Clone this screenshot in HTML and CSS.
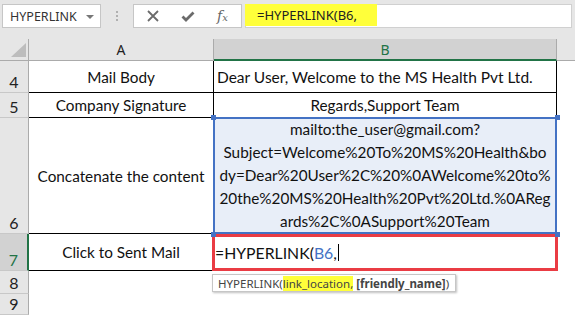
FILE: index.html
```html
<!DOCTYPE html>
<html>
<head>
<meta charset="utf-8">
<link rel="stylesheet" href="styles.css">
</head>
<body>
<div class="app">
  <div class="toolbar">
    <div class="namebox"><span class="nb-text">HYPERLINK</span><span class="caret"></span></div>
    <div class="dots"><i></i><i></i><i></i></div>
    <div class="fxbox">
      <svg class="ico" width="14" height="14" viewBox="0 0 14 14"><path d="M2 2 L12 12 M12 2 L2 12" stroke="#6b6b6b" stroke-width="1.8" fill="none"/></svg>
      <svg class="ico" width="16" height="14" viewBox="0 0 16 14"><path d="M2.5 7.5 L6 11 L13.5 3.5" stroke="#6b6b6b" stroke-width="2.8" fill="none"/></svg>
      <span class="fx"><span class="f">f</span><span class="x">x</span></span>
    </div>
    <div class="formula"><span class="hl">=HYPERLINK(B6,</span></div>
  </div>
  <div class="sheet">
    <div class="corner"><span class="tri"></span></div>
    <div class="ch">A</div>
    <div class="ch ch-sel">B</div>
    <div class="ch ch-fill"></div>

    <div class="rh">4</div>
    <div class="c">Mail Body</div>
    <div class="c c-left">Dear User, Welcome to the MS Health Pvt Ltd.</div>
    <div class="blank"></div>

    <div class="rh">5</div>
    <div class="c">Company Signature</div>
    <div class="c">Regards,Support Team</div>
    <div class="blank"></div>

    <div class="rh">6</div>
    <div class="c">Concatenate the content</div>
    <div class="c c-ref"><div class="wrap">mailto:the_user@gmail.com?<br>Subject=Welcome%20To%20MS%20Health&amp;bo<br>dy=Dear%20User%2C%20%0AWelcome%20to%<br>20the%20MS%20Health%20Pvt%20Ltd.%0AReg<br>ards%2C%0ASupport%20Team</div><span class="h h-tl"></span><span class="h h-tr"></span><span class="h h-bl"></span><span class="h h-br"></span></div>
    <div class="blank"></div>

    <div class="rh rh-sel">7</div>
    <div class="c">Click to Sent Mail</div>
    <div class="c c-edit"><span class="edit">=HYPERLINK(<span class="ref">B6</span>,<span class="cursor"></span></span>
      <div class="tip">HYPERLINK(<span class="tip-hl">link_location,</span> <b>[friendly_name]</b>)</div>
    </div>
    <div class="blank"></div>

    <div class="rh">8</div>
    <div class="e"></div>
    <div class="e"></div>
    <div class="blank"></div>

    <div class="rh">9</div>
    <div class="e"></div>
    <div class="e"></div>
    <div class="blank"></div>
  </div>
</div>
</body>
</html>
```
FILE: styles.css
```css
* { box-sizing: border-box; }
html, body { margin: 0; padding: 0; }
body { width: 575px; height: 315px; overflow: hidden; background: #fff; font-family: Lato, "Open Sans", sans-serif; }
.app { display: flex; flex-direction: column; height: 315px; background: #e6e6e6; }

.toolbar { height: 39px; display: flex; align-items: flex-start; padding: 4px 2px 0 2px; }
.namebox { width: 99px; height: 24px; background: #fff; border: 1px solid #c6c6c6; display: flex; align-items: center; justify-content: space-between; padding: 0 6px 0 7px; font-family: "Noto Sans", sans-serif; font-size: 12.5px; color: #333; }
.caret { width: 0; height: 0; border-left: 4px solid transparent; border-right: 4px solid transparent; border-top: 4px solid #777; margin-top: 1px; }
.dots { width: 32px; height: 24px; display: flex; flex-direction: column; align-items: center; justify-content: center; gap: 2px; }
.dots i { width: 2px; height: 2px; background: #b0b0b0; display: block; }
.fxbox { width: 109px; height: 24px; background: #fff; border: 1px solid #c6c6c6; display: flex; align-items: center; padding-left: 12px; gap: 0; }
.fxbox .ico:first-child { margin-right: 20px; }
.fxbox .ico:nth-child(2) { margin-right: 21px; }
.fx { font-family: "DejaVu Serif", serif; font-style: italic; color: #666; font-size: 14px; line-height: 1; }
.fx .x { font-size: 10px; }
.formula { flex: 1; height: 24px; margin-left: 3px; margin-right: 1px; background: #fff; border: 1px solid #d0d0d0; display: flex; }
.hl { background: #ffff3a; width: 132px; height: 22px; margin-left: -1px; margin-top: -1px; padding-left: 12px; display: flex; align-items: center; font-family: "Noto Sans", sans-serif; font-size: 13px; color: #222; }

.sheet { flex: 1; display: grid; grid-template-columns: 29px 185px 343px 18px; grid-template-rows: 22px 32px 25px 116px 37px 23px 1fr; background: #fff; }
.corner { background: #e6e6e6; border-right: 1px solid #ababab; border-bottom: 1px solid #ababab; position: relative; }
.tri { position: absolute; left: 11px; top: 4px; width: 0; height: 0; border-left: 15px solid transparent; border-bottom: 14px solid #bdbdbd; }
.ch { background: #e6e6e6; border-right: 1px solid #ababab; border-bottom: 1px solid #ababab; display: flex; align-items: center; justify-content: center; font-family: "Noto Sans", sans-serif; font-size: 14px; color: #222; }
.ch-sel { background: #d2d2d2; border-bottom: 2px solid #217346; color: #217346; }
.ch-fill { border-right: none; }

.rh { background: #e6e6e6; border-right: 1px solid #ababab; border-bottom: 1px solid #c8c8c8; display: flex; align-items: flex-end; justify-content: center; padding-bottom: 1px; font-size: 16px; color: #222; line-height: 1.1; }
.rh-sel { background: #d2d2d2; border-right: 2px solid #217346; color: #217346; }

.c { border-right: 1px solid #000; border-bottom: 1px solid #000; display: flex; align-items: center; justify-content: center; text-align: center; font-size: 15.3px; color: #111; white-space: nowrap; position: relative; }
.c-left { justify-content: flex-start; padding-left: 3px; font-size: 15.5px; }
.e { background: #fff; }
.blank { background: #fff; }

.c-ref { background: #e8eef8; }
.c-ref::after { content: ""; position: absolute; left: -1px; top: -1px; right: -1px; bottom: -1px; border: 2px solid #4472c4; pointer-events: none; }
.wrap { line-height: 23px; }
.h { position: absolute; width: 5px; height: 5px; background: #4472c4; z-index: 2; }
.h-tl { left: -3px; top: -3px; }
.h-tr { right: -4px; top: -3px; }
.h-bl { left: -3px; bottom: -4px; }
.h-br { right: -4px; bottom: -4px; }

.c-edit { justify-content: flex-start; overflow: visible; }
.c-edit::after { content: ""; position: absolute; left: -2px; top: 0; right: -2px; bottom: -1px; border: 3px solid #ea3c44; pointer-events: none; }
.edit { padding-left: 1px; display: flex; align-items: center; font-size: 15.8px; }
.ref { color: #4472c4; }
.cursor { display: inline-block; width: 1px; height: 17px; background: #000; margin-left: 1px; }
.tip { position: absolute; left: -2px; top: 40px; height: 18px; padding: 0 6px 0 5px; background: #fff; border: 1px solid #c6c6c6; box-shadow: 1px 1px 2px rgba(0,0,0,0.25); font-family: "Noto Sans", sans-serif; font-size: 11.5px; color: #444; display: flex; align-items: center; white-space: nowrap; z-index: 5; }
.tip-hl { background: #ffff3a; }
.tip b { font-weight: 700; margin-left: 3px; }
```
